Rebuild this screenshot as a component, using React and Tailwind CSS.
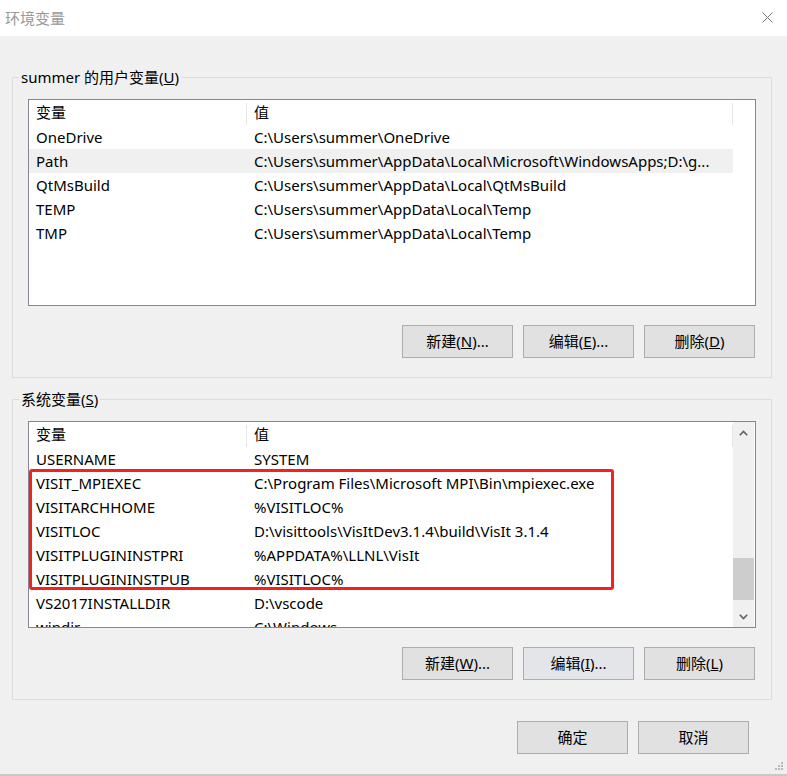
import React from 'react'

const USER_VARS = [
  ['OneDrive', 'C:\\Users\\summer\\OneDrive'],
  ['Path', 'C:\\Users\\summer\\AppData\\Local\\Microsoft\\WindowsApps;D:\\g...', true],
  ['QtMsBuild', 'C:\\Users\\summer\\AppData\\Local\\QtMsBuild'],
  ['TEMP', 'C:\\Users\\summer\\AppData\\Local\\Temp'],
  ['TMP', 'C:\\Users\\summer\\AppData\\Local\\Temp'],
]

const SYS_VARS = [
  ['USERNAME', 'SYSTEM'],
  ['VISIT_MPIEXEC', 'C:\\Program Files\\Microsoft MPI\\Bin\\mpiexec.exe'],
  ['VISITARCHHOME', '%VISITLOC%'],
  ['VISITLOC', 'D:\\visittools\\VisItDev3.1.4\\build\\VisIt 3.1.4'],
  ['VISITPLUGININSTPRI', '%APPDATA%\\LLNL\\VisIt'],
  ['VISITPLUGININSTPUB', '%VISITLOC%'],
  ['VS2017INSTALLDIR', 'D:\\vscode'],
  ['windir', 'C:\\Windows'],
]

export default function App() {
  return (
    <div className="w-[787px] h-[776px] bg-[#f0f0f0] flex flex-col text-[15px] text-black font-['Noto_Sans','Noto_Sans_CJK_SC',sans-serif] overflow-hidden border-b-2 border-[#c8c8c8]">
      {/* title bar */}
      <div className="h-[36px] bg-white flex items-center justify-between pl-[5px] pr-[14px] shrink-0">
        <span className="text-[#999999]">环境变量</span>
        <svg width="11" height="11" viewBox="0 0 11 11" className="mb-[2px]">
          <path d="M0.5 0.5 L10.5 10.5 M10.5 0.5 L0.5 10.5" stroke="#767676" strokeWidth="1" />
        </svg>
      </div>

      <div className="flex-1 flex flex-col pl-[12px] pr-[15px] relative">
        <GroupBox className="mt-[31px]" title={<>summer 的用户变量(<u>U</u>)</>}>
          <VarList rows={USER_VARS} />
          <ButtonRow labels={[
            <>新建(<u>N</u>)...</>,
            <>编辑(<u>E</u>)...</>,
            <>删除(<u>D</u>)</>,
          ]} />
        </GroupBox>

        <GroupBox className="mt-[11px]" title={<>系统变量(<u>S</u>)</>}>
          <VarList rows={SYS_VARS} scrollbar>
            {/* red annotation box */}
            <div className="absolute left-0 top-[47px] w-[585px] h-[121px] border-[3px] border-[#f52020] rounded-[3px] pointer-events-none" />
          </VarList>
          <ButtonRow focus labels={[
            <>新建(<u>W</u>)...</>,
            <>编辑(<u>I</u>)...</>,
            <>删除(<u>L</u>)</>,
          ]} />
        </GroupBox>

        <div className="flex justify-end gap-[10px] mt-[21px] pr-[23px]">
          <Btn className="h-[33px]">确定</Btn>
          <Btn className="h-[33px]">取消</Btn>
        </div>
      </div>

      {/* resize grip */}
      <div className="h-0 relative">
        <svg width="10" height="10" viewBox="0 0 10 10" className="absolute right-[3px] bottom-[3px]">
          <rect x="7" y="1" width="2" height="2" fill="#b9b9b9" />
          <rect x="4" y="4" width="2" height="2" fill="#b9b9b9" />
          <rect x="7" y="4" width="2" height="2" fill="#b9b9b9" />
          <rect x="1" y="7" width="2" height="2" fill="#b9b9b9" />
          <rect x="4" y="7" width="2" height="2" fill="#b9b9b9" />
          <rect x="7" y="7" width="2" height="2" fill="#b9b9b9" />
        </svg>
      </div>
    </div>
  )
}

function GroupBox({ title, children, className = '' }) {
  return (
    <fieldset className={`border border-[#dcdcdc] px-[15px] pt-[12px] pb-[19px] ${className}`}>
      <legend className="ml-[-9px] px-[2px] leading-[20px]">{title}</legend>
      {children}
    </fieldset>
  )
}

function VarList({ rows, scrollbar, children }) {
  return (
    <div className="h-[207px] border border-[#828790] bg-white flex overflow-hidden">
      <div className="flex-1 relative overflow-hidden">
        <div className="h-[25px] flex items-center">
          <div className="w-[217px] pl-[7px] h-full flex items-center">变量</div>
          <div className="w-px h-[22px] self-end bg-[#e5e5e5]" />
          <div className="flex-1 pl-[7px] flex items-center">值</div>
          <div className="w-px h-[22px] self-end bg-[#e5e5e5]" />
        </div>
        {rows.map(([name, value, sel]) => (
          <div key={name} className={`h-[24px] flex items-center whitespace-nowrap ${sel ? 'bg-[#f0f0f0]' : ''}`}>
            <div className="w-[218px] pl-[7px] overflow-hidden">{name}</div>
            <div className="flex-1 pl-[7px] overflow-hidden">{value}</div>
          </div>
        ))}
        {children}
      </div>
      {scrollbar ? (
        <div className="w-[21px] bg-[#f0f0f0] flex flex-col mr-[1px]">
          <div className="h-[21px] flex items-center justify-center">
            <svg width="9" height="6" viewBox="0 0 9 6">
              <path d="M0.8 5.2 L4.5 1.5 L8.2 5.2" fill="none" stroke="#606060" strokeWidth="1.6" />
            </svg>
          </div>
          <div className="flex-1">
            <div className="mt-[115px] h-[42px] bg-[#cdcdcd]" />
          </div>
          <div className="h-[21px] flex items-center justify-center">
            <svg width="9" height="6" viewBox="0 0 9 6">
              <path d="M0.8 0.8 L4.5 4.5 L8.2 0.8" fill="none" stroke="#606060" strokeWidth="1.6" />
            </svg>
          </div>
        </div>
      ) : (
        <div className="w-[22px]" />
      )}
    </div>
  )
}

function ButtonRow({ labels, focus }) {
  return (
    <div className="flex justify-end gap-[10px] mt-[19px] pr-[1px]">
      {labels.map((l, i) => (
        <Btn key={i} className={`h-[33px] ${focus && i === 1 ? 'border-[#a3adb8] bg-[#e3e5e8]' : ''}`}>{l}</Btn>
      ))}
    </div>
  )
}

function Btn({ children, className = '' }) {
  return (
    <button className={`w-[111px] border border-[#adadad] bg-[#e1e1e1] flex items-center justify-center ${className}`}>
      <span>{children}</span>
    </button>
  )
}
